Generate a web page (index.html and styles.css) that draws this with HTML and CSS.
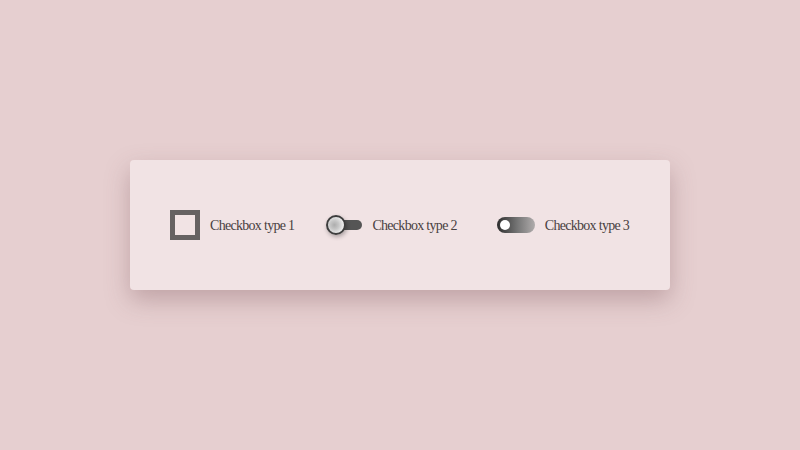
FILE: index.html
```html
<!DOCTYPE html>
<html>
<head>
<meta charset="utf-8">
<link rel="stylesheet" href="styles.css">
</head>
<body>
<div class="card">
  <label class="item item1">
    <span class="box"></span>
    <span class="text">Checkbox type 1</span>
  </label>
  <label class="item item2">
    <span class="switch2"><span class="knob2"></span></span>
    <span class="text">Checkbox type 2</span>
  </label>
  <label class="item item3">
    <span class="switch3"><span class="knob3"></span></span>
    <span class="text">Checkbox type 3</span>
  </label>
</div>
</body>
</html>
```
FILE: styles.css
```css
html, body {
  margin: 0;
  padding: 0;
}
body {
  width: 800px;
  height: 450px;
  background: #e6cfd0;
  display: flex;
  align-items: center;
  justify-content: center;
  font-family: "Liberation Serif", "Times New Roman", serif;
}
.card {
  width: 540px;
  height: 130px;
  box-sizing: border-box;
  padding: 0 40px;
  background: #f1e3e4;
  border-radius: 4px;
  box-shadow: 0 10px 24px rgba(120, 80, 85, 0.35);
  display: flex;
  align-items: center;
}
.item {
  display: flex;
  align-items: center;
  gap: 10px;
  white-space: nowrap;
}
.item2 { margin-left: 32px; }
.item3 { margin-left: 40px; }
.text {
  font-size: 14px;
  letter-spacing: -0.7px;
  color: #48403f;
  padding-top: 1px;
}
.box {
  width: 30px;
  height: 30px;
  box-sizing: border-box;
  border: 5px solid #666262;
}
.switch2 {
  position: relative;
  width: 33px;
  height: 10px;
  background: #555;
  border-radius: 5px;
  margin-left: 3px;
}
.knob2 {
  position: absolute;
  left: -3px;
  top: -5px;
  width: 20px;
  height: 20px;
  box-sizing: border-box;
  border: 2px solid #3e3e3e;
  border-radius: 50%;
  background: radial-gradient(circle at 40% 50%, #adadad 0%, #c6c6c6 35%, #f6f6f6 80%);
  box-shadow: 1px 2px 4px rgba(0,0,0,0.3);
}
.switch3 {
  position: relative;
  width: 38px;
  height: 16px;
  border-radius: 8px;
  background: linear-gradient(to right, #2e2e2e 0%, #777 55%, #b0acac 100%);
}
.knob3 {
  position: absolute;
  left: 3px;
  top: 3px;
  width: 10px;
  height: 10px;
  border-radius: 50%;
  background: #fff;
}
```
